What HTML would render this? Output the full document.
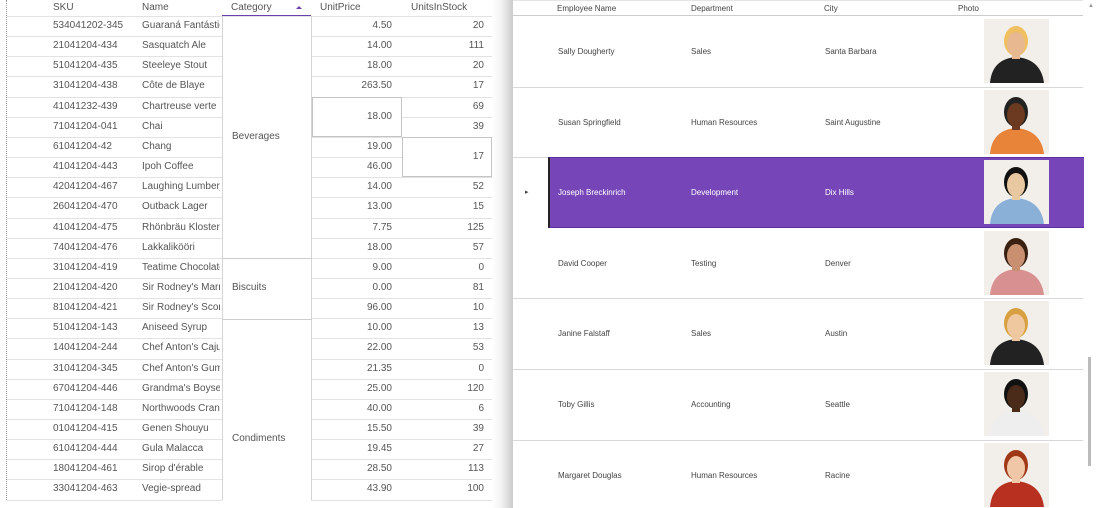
<!DOCTYPE html>
<html><head><meta charset="utf-8"><style>
*{margin:0;padding:0;box-sizing:border-box}
body{width:1100px;height:508px;overflow:hidden;background:#fff;font-family:"Liberation Sans",sans-serif;position:relative;color:#333}
.a{position:absolute}
.h{font-size:10px;color:#555;top:2px}
.c{position:absolute;font-size:10px;color:#555;height:20.15px;line-height:20px;white-space:nowrap;overflow:hidden}
.ln{position:absolute;height:1px;background:#e2e2e2}
.r{text-align:right}
.e{position:absolute;font-size:8px;color:#444}
</style></head><body>
<div class="a" style="left:6px;top:0;width:1px;height:500px;border-left:1px dotted #999"></div>
<div class="a h" style="left:53px">SKU</div>
<div class="a h" style="left:142px">Name</div>
<div class="a h" style="left:231px">Category</div>
<div class="a" style="left:296px;top:6px;width:0;height:0;border-left:3px solid transparent;border-right:3px solid transparent;border-bottom:3px solid #6a3fb0"></div>
<div class="a" style="left:222px;top:15px;width:89px;height:2px;background:#6a3fb0"></div>
<div class="a h" style="left:320px">UnitPrice</div>
<div class="a h" style="left:411px">UnitsInStock</div>
<div class="ln" style="left:7px;top:16px;width:485px"></div>
<div id="L"></div>
<div class="a" style="left:222px;top:16px;width:90px;height:484px;border-left:1px solid #d4d4d4;border-right:1px solid #d4d4d4"></div>
<div class="ln" style="left:222px;top:258px;width:90px;background:#ccc"></div>
<div class="ln" style="left:222px;top:319px;width:90px;background:#ccc"></div>
<div class="c" style="left:232px;top:127px">Beverages</div>
<div class="c" style="left:232px;top:278px">Biscuits</div>
<div class="c" style="left:232px;top:429px">Condiments</div>
<div class="a" style="left:492px;top:0;width:22px;height:508px;background:linear-gradient(to right,#fff,#f4f4f4 40%,#c8c8c8)"></div>
<div class="a" style="left:513px;top:0;width:587px;height:508px;background:#fff"></div>
<div class="ln" style="left:513px;top:0;width:570px;background:#e4e4e4"></div>
<div class="e" style="left:557px;top:4px">Employee Name</div>
<div class="e" style="left:691px;top:4px">Department</div>
<div class="e" style="left:824px;top:4px">City</div>
<div class="e" style="left:958px;top:4px">Photo</div>
<div class="e" style="left:1088px;top:3px;font-size:6px;color:#999">▲</div>
<div class="ln" style="left:513px;top:15px;width:570px;background:#ccc"></div>
<div class="ln" style="left:513px;top:157px;width:570px;background:#d8d8d8"></div>
<div class="a" style="left:548px;top:157px;width:536px;height:71px;background:#7646b8;border-left:2px solid #222;border-top:1px solid #5a2fa0;border-bottom:1px solid #5a2fa0"></div>
<div class="e" style="left:525px;top:188px;font-size:7px">▸</div>
<div id="R"></div>
<div class="a" style="left:1088px;top:357px;width:3px;height:109px;background:#bbb"></div>
<script>
var L=[["534041202-345","Guaraná Fantástica","4.50","20"],["21041204-434","Sasquatch Ale","14.00","111"],["51041204-435","Steeleye Stout","18.00","20"],["31041204-438","Côte de Blaye","263.50","17"],["41041232-439","Chartreuse verte","",""+69],["71041204-041","Chai","","39"],["61041204-42","Chang","19.00",""],["41041204-443","Ipoh Coffee","46.00",""],["42041204-467","Laughing Lumberjack","14.00","52"],["26041204-470","Outback Lager","13.00","15"],["41041204-475","Rhönbräu Klosterbier","7.75","125"],["74041204-476","Lakkalikööri","18.00","57"],["31041204-419","Teatime Chocolate","9.00","0"],["21041204-420","Sir Rodney's Marmalade","0.00","81"],["81041204-421","Sir Rodney's Scones","96.00","10"],["51041204-143","Aniseed Syrup","10.00","13"],["14041204-244","Chef Anton's Cajun","22.00","53"],["31041204-345","Chef Anton's Gumbo","21.35","0"],["67041204-446","Grandma's Boysen","25.00","120"],["71041204-148","Northwoods Cranberry","40.00","6"],["01041204-415","Genen Shouyu","15.50","39"],["61041204-444","Gula Malacca","19.45","27"],["18041204-461","Sirop d'érable","28.50","113"],["33041204-463","Vegie-spread","43.90","100"]];
var h="";for(var i=0;i<L.length;i++){var t=16+i*20.15;var r=L[i];
h+='<div class="c" style="left:53px;top:'+t+'px">'+r[0]+'</div><div class="c" style="left:142px;top:'+t+'px;width:78px">'+r[1]+'</div>';
if(r[2])h+='<div class="c r" style="left:311px;width:81px;top:'+t+'px">'+r[2]+'</div>';
if(r[3])h+='<div class="c r" style="left:401px;width:83px;top:'+t+'px">'+r[3]+'</div>';
h+='<div class="ln" style="left:7px;top:'+(t+20.15)+'px;width:215px"></div>';
if(i!=4)h+='<div class="ln" style="left:311px;top:'+(t+20.15)+'px;width:91px"></div>';
if(i!=6)h+='<div class="ln" style="left:401px;top:'+(t+20.15)+'px;width:91px"></div>';}
h+='<div class="a" style="left:312px;top:96.6px;width:90px;height:40.3px;border:1px solid #c4c4c4"></div><div class="c r" style="left:311px;width:81px;top:106.6px">18.00</div>';
h+='<div class="a" style="left:402px;top:136.9px;width:90px;height:40.3px;border:1px solid #c4c4c4"></div><div class="c r" style="left:401px;width:83px;top:146.9px">17</div>';
document.getElementById("L").innerHTML=h;
var R=[["Sally Dougherty","Sales","Santa Barbara","#f0c060","#e8b890","#222"],["Susan Springfield","Human Resources","Saint Augustine","#222","#6b3a20","#e8843a"],["Joseph Breckinrich","Development","Dix Hills","#111","#e8c8a0","#8ab0d8"],["David Cooper","Testing","Denver","#3a2010","#c89070","#d89090"],["Janine Falstaff","Sales","Austin","#d8a040","#f0c8a0","#222"],["Toby Gillis","Accounting","Seattle","#111","#4a2a18","#eee"],["Margaret Douglas","Human Resources","Racine","#a03818","#f0c8a8","#b83020"]];
var g="";for(var j=0;j<R.length;j++){var t=16+j*70.6;var r=R[j];var col=j==2?"#fff":"#444";
g+='<div class="e" style="left:558px;top:'+(t+31)+'px;color:'+col+'">'+r[0]+'</div><div class="e" style="left:691px;top:'+(t+31)+'px;color:'+col+'">'+r[1]+'</div><div class="e" style="left:825px;top:'+(t+31)+'px;color:'+col+'">'+r[2]+'</div>';
g+='<svg class="a" style="left:984px;top:'+(t+3)+'px" width="65" height="64" viewBox="0 0 65 64"><rect width="65" height="64" fill="#f2efea"/><path d="M6 64 Q8 40 32 38 Q57 40 60 64Z" fill="'+r[5]+'"/><ellipse cx="32" cy="22" rx="12" ry="15" fill="'+r[3]+'"/><ellipse cx="32" cy="25" rx="9" ry="12" fill="'+r[4]+'"/><rect x="28" y="34" width="8" height="6" fill="'+r[4]+'"/></svg>';
if(j!=1&&j!=2&&j!=6)g+='<div class="ln" style="left:513px;top:'+(t+70.6)+'px;width:570px;background:#d8d8d8"></div>';}
document.getElementById("R").innerHTML=g;
</script>
</body></html>
